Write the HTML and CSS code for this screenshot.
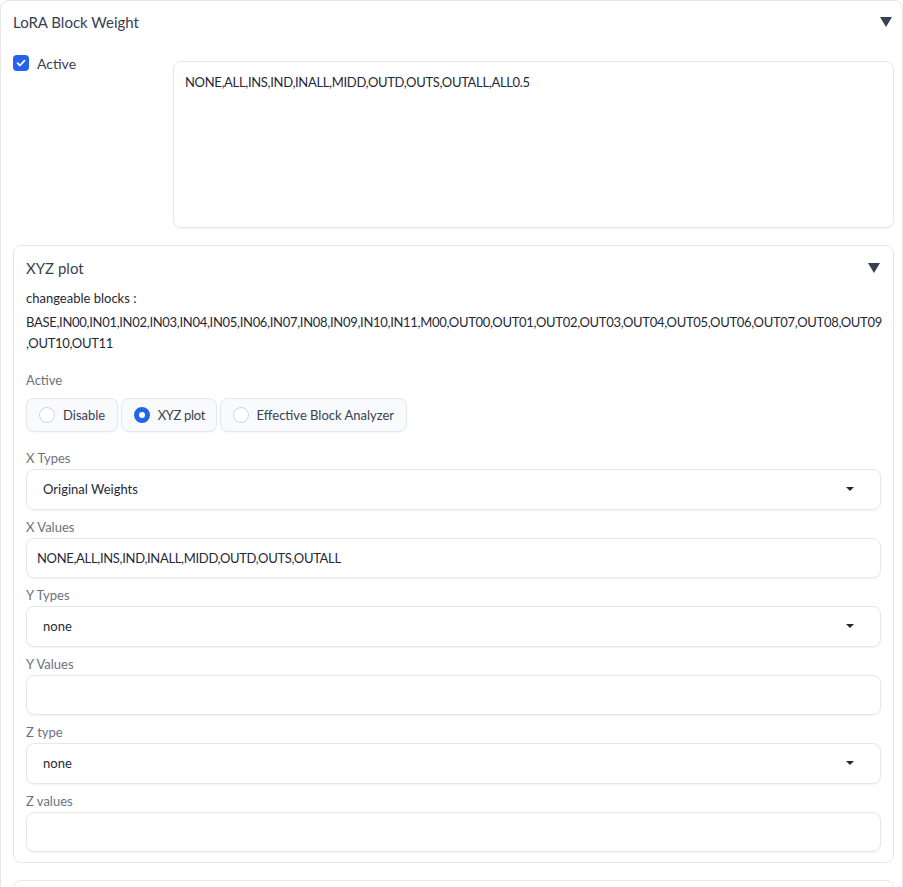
FILE: index.html
```html
<html>

<head>
    <title>LoRA Block Weight</title>
    <link rel="stylesheet" href="styles.css">
</head>

<body>
    <div class="block outer">
        <div class="block-head">
            <span>LoRA Block Weight</span>
            <span class="caret"></span>
        </div>

        <div class="top-row">
            <label class="check">
                <span class="check-box">
                    <svg width="10" height="10" viewBox="0 0 10 10">
                        <path d="M1.6 5.2 L4 7.5 L8.5 2.6" fill="none" stroke="#fff" stroke-width="1.8" stroke-linecap="round" stroke-linejoin="round"/>
                    </svg>
                </span>
                Active
            </label>
            <div class="textarea caps">NONE,ALL,INS,IND,INALL,MIDD,OUTD,OUTS,OUTALL,ALL0.5</div>
        </div>

        <div class="block inner">
            <div class="block-head">
                <span>XYZ plot</span>
                <span class="caret"></span>
            </div>

            <p class="note">changeable blocks :</p>
            <p class="note blocks caps">BASE,IN00,IN01,IN02,IN03,IN04,IN05,IN06,IN07,IN08,IN09,IN10,IN11,M00,OUT00,OUT01,OUT02,OUT03,OUT04,OUT05,OUT06,OUT07,OUT08,OUT09<br>,OUT10,OUT11</p>

            <div class="radio-field">
                <div class="field-label">Active</div>
                <div class="radios">
                    <label class="radio"><span class="dot"></span>Disable</label>
                    <label class="radio caps"><span class="dot on"></span>XYZ plot</label>
                    <label class="radio"><span class="dot"></span>Effective Block Analyzer</label>
                </div>
            </div>

            <div class="fields">
                <div class="field">
                    <div class="field-label">X Types</div>
                    <div class="select">Original Weights<span class="select-caret"></span></div>
                </div>
                <div class="field">
                    <div class="field-label">X Values</div>
                    <div class="input caps">NONE,ALL,INS,IND,INALL,MIDD,OUTD,OUTS,OUTALL</div>
                </div>
                <div class="field">
                    <div class="field-label">Y Types</div>
                    <div class="select">none<span class="select-caret"></span></div>
                </div>
                <div class="field">
                    <div class="field-label">Y Values</div>
                    <div class="input"></div>
                </div>
                <div class="field">
                    <div class="field-label">Z type</div>
                    <div class="select">none<span class="select-caret"></span></div>
                </div>
                <div class="field">
                    <div class="field-label">Z values</div>
                    <div class="input"></div>
                </div>
            </div>
        </div>

        <div class="block next"></div>
    </div>
</body>

</html>
```

FILE: styles.css
```css
* {
    box-sizing: border-box;
    font-family: Lato, "Liberation Sans", sans-serif;
}

html, body {
    margin: 0;
    padding: 0;
    background: #fff;
    color: #1f2937;
}

.block {
    border: 1px solid #e5e7eb;
    border-radius: 8px;
    background: #fff;
}

.outer {
    width: 903px;
    padding: 10px 8px 40px 12px;
}

.block-head {
    display: flex;
    justify-content: space-between;
    align-items: center;
    height: 22px;
    font-size: 15px;
    color: #374151;
}

.caret {
    width: 0;
    height: 0;
    border-left: 6.5px solid transparent;
    border-right: 6.5px solid transparent;
    border-top: 10px solid #374151;
}

.outer > .block-head .caret {
    margin-right: 2px;
}

.inner > .block-head .caret {
    margin-right: 1px;
}

/* caps-heavy strings run wide in Lato */
.caps {
    letter-spacing: -0.32px;
}

.top-row {
    display: grid;
    grid-template-columns: 148px 1fr;
    gap: 12px;
    margin-top: 22px;
}

.check {
    display: flex;
    align-items: center;
    gap: 8px;
    height: 16px;
    font-size: 14px;
    color: #374151;
}

.check-box {
    width: 16px;
    height: 16px;
    border-radius: 4px;
    background: #2563eb;
    display: flex;
    align-items: center;
    justify-content: center;
}

.textarea {
    margin-top: 6px;
    height: 167px;
    padding: 10px 11px;
    border: 1px solid #e5e7eb;
    border-radius: 8px;
    box-shadow: 0 1px 2px rgba(0, 0, 0, 0.05);
    font-size: 13px;
    line-height: 20px;
}

.inner {
    margin-top: 17px;
    padding: 11px 12px 10px;
}

.note {
    margin: 8.5px 0 0;
    font-size: 13px;
    line-height: 21px;
    color: #1f2937;
}

.note.blocks {
    margin-top: 3px;
    white-space: nowrap;
    letter-spacing: -0.3px;
}

.radio-field {
    margin-top: 17.5px;
}

.field-label {
    height: 18px;
    line-height: 18px;
    font-size: 13px;
    color: #6b7280;
}

.radios {
    display: flex;
    gap: 2.5px;
    margin-top: 9px;
}

.radio {
    display: flex;
    align-items: center;
    gap: 8px;
    height: 34px;
    padding: 0 12px;
    border: 1px solid #e5e7eb;
    border-radius: 8px;
    background: #f9fafb;
    box-shadow: 0 1px 2px rgba(0, 0, 0, 0.04);
    font-size: 13px;
    color: #374151;
}

.radio.caps {
    padding-right: 11px;
}

.dot {
    width: 16px;
    height: 16px;
    border-radius: 50%;
    border: 1px solid #d1d5db;
    background: #fff;
}

.dot.on {
    border: 5px solid #2563eb;
    background: #fff;
}

.fields {
    display: flex;
    flex-direction: column;
    gap: 8px;
    margin-top: 17px;
}

.field .field-label {
    margin-bottom: 2px;
}

.select, .input {
    display: flex;
    align-items: center;
    height: 40.5px;
    border: 1px solid #e5e7eb;
    border-radius: 8px;
    box-shadow: 0 1px 2px rgba(0, 0, 0, 0.05);
    font-size: 13px;
    color: #1f2937;
}

.select {
    justify-content: space-between;
    padding: 0 26px 0 16px;
}

.input {
    padding: 0 10px;
}

.select-caret {
    width: 0;
    height: 0;
    border-left: 4px solid transparent;
    border-right: 4px solid transparent;
    border-top: 4px solid #1f2937;
}

.next {
    margin-top: 17px;
    height: 60px;
}
```
